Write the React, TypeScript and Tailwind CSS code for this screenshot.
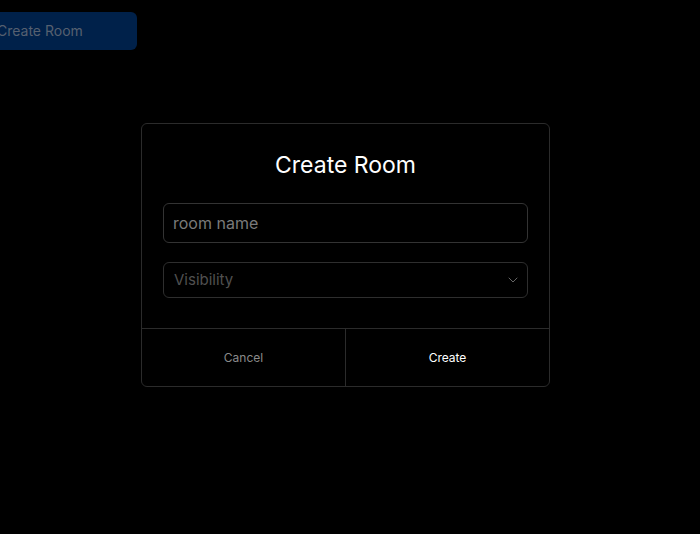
import { ChevronDown } from "lucide-react";

export default function App() {
  return (
    <div
      className="relative h-[534px] w-[700px] overflow-hidden bg-black"
      style={{ fontFamily: "Inter, 'Noto Sans', sans-serif" }}
    >
      {/* page behind the dialog */}
      <div className="pt-3">
        <button className="-ml-[19px] flex h-[38px] w-[156px] items-center rounded-md bg-[#00214a] pl-4 text-sm text-[#566070]">
          Create Room
        </button>
      </div>

      {/* dialog */}
      <div className="absolute left-[141px] top-[123px] w-[409px] rounded-md border border-[#2b2b2b] bg-black">
        <div className="px-[21px] pt-[25px] pb-[30px]">
          <h2 className="text-center text-[23px] leading-8 text-white">Create Room</h2>
          <input
            className="mt-[22px] h-[40px] w-full rounded-md border border-[#333] bg-transparent px-[9px] text-base text-white outline-none placeholder:text-[#7a7a7a]"
            placeholder="room name"
          />
          <div className="mt-[19px] flex h-[36px] w-full items-center justify-between rounded-md border border-[#2e2e2e] pl-[10px] pr-[6px]">
            <span className="text-[15px] text-[#505050]">Visibility</span>
            <ChevronDown className="h-4 w-4 text-[#666]" strokeWidth={1.5} />
          </div>
        </div>
        <div className="flex h-[58px] border-t border-[#2b2b2b]">
          <button className="flex-1 text-xs text-[#8a8a8a]">Cancel</button>
          <button className="flex-1 border-l border-[#2b2b2b] text-xs text-white">Create</button>
        </div>
      </div>
    </div>
  );
}
